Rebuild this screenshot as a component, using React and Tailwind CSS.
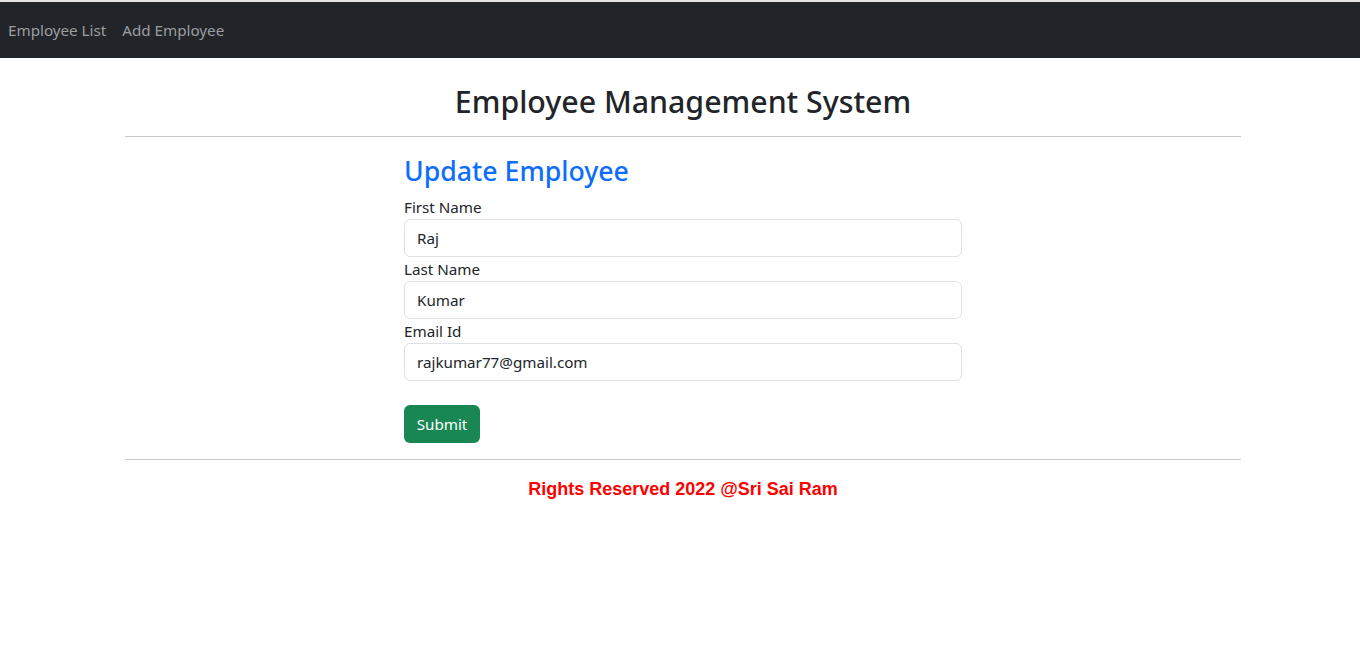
export default function App() {
  const font = { fontFamily: '"Noto Sans", "Open Sans", sans-serif' };
  const Field = ({ label, value }) => (
    <div className="flex flex-col">
      <label className="h-[24px] text-[15.2px] leading-[24px] text-[#212529]">{label}</label>
      <input
        readOnly
        value={value}
        className="h-[38px] w-full rounded-[6px] border border-[#dee2e6] px-[12px] text-[15.2px] text-[#212529] outline-none"
        style={font}
      />
    </div>
  );
  return (
    <div className="min-h-[656px] bg-white" style={font}>
      <div className="h-[2px] bg-[#e3e3e3]" />
      <nav className="flex h-[56px] items-center bg-[#212529]">
        <a className="px-[8px] text-[15.2px] text-[#9a9da0]">Employee List</a>
        <a className="px-[8px] text-[15.2px] text-[#9a9da0]">Add Employee</a>
      </nav>
      <div className="ml-[125px] w-[1116px]">
        <h2 className="mt-[24px] h-[38px] text-center text-[30.3px] font-medium leading-[40px] text-[#212529]">
          Employee Management System
        </h2>
        <hr className="my-[16px] border-t border-[#c8c8c8]" />
        <div className="ml-[279px] w-[558px]">
          <h3 className="h-[34px] text-[26.7px] font-medium leading-[36px] text-[#0d6efd]">Update Employee</h3>
          <div className="mt-[8px] flex flex-col">
            <Field label="First Name" value="Raj" />
            <Field label="Last Name" value="Kumar" />
            <Field label="Email Id" value="rajkumar77@gmail.com" />
          </div>
          <button className="mt-[24px] h-[38px] w-[76px] rounded-[6px] bg-[#198754] text-[15.2px] text-white">
            Submit
          </button>
        </div>
        <hr className="my-[16px] border-t border-[#c8c8c8]" />
        <p
          className="text-center text-[18px] font-bold leading-[26px] text-[#ff0000]"
          style={{ fontFamily: '"Liberation Sans", Arial, sans-serif' }}
        >
          Rights Reserved 2022 @Sri Sai Ram
        </p>
      </div>
    </div>
  );
}
